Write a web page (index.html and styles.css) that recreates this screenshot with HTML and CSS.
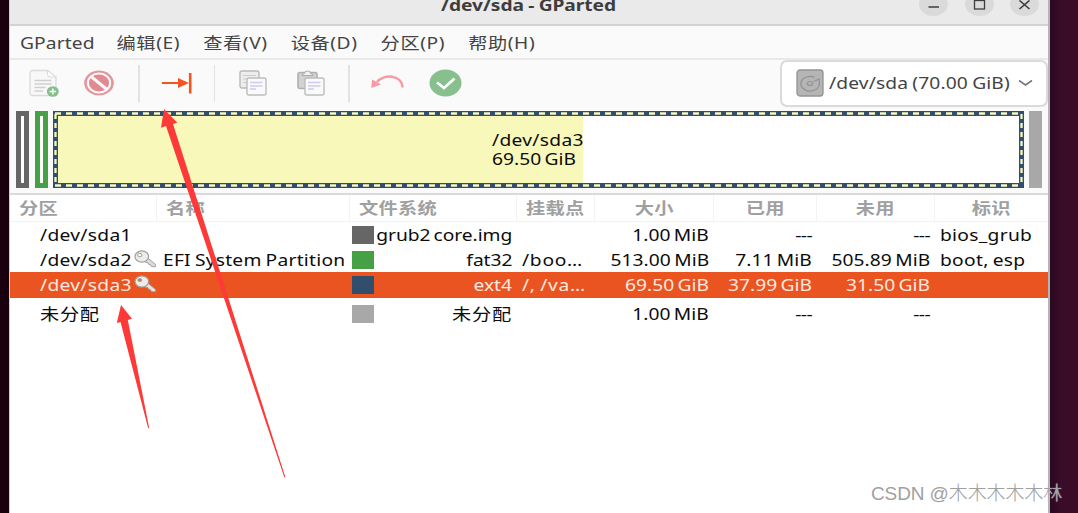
FILE: index.html
```html
<!DOCTYPE html>
<html lang="zh-CN">

<head>
    <meta charset="UTF-8">
    <meta name="viewport" content="width=device-width, initial-scale=1.0">
    <title>/dev/sda - GParted</title>
    <link rel="stylesheet" href="styles.css">
</head>

<body>
    <div class="window">
        <div class="titlebar">
            <div class="title"><span class="wide">/dev/sda - GParted</span></div>
            <div class="window-buttons">
                <svg width="29" height="24" viewBox="0 0 29 24"><ellipse cx="14.5" cy="12" rx="14.5" ry="12" fill="#dadada"/><path d="M9.500 15h10.500" stroke="#3d3d3d" stroke-width="1.500"/></svg>
                <svg width="29" height="24" viewBox="0 0 29 24"><ellipse cx="14.5" cy="12" rx="14.5" ry="12" fill="#dadada"/><rect x="9.500" y="8.500" width="10" height="8.500" fill="none" stroke="#3d3d3d" stroke-width="1.300"/></svg>
                <svg width="29" height="24" viewBox="0 0 29 24"><ellipse cx="14.5" cy="12" rx="14.5" ry="12" fill="#dadada"/><path d="M9.500 8.500l10 8.500M19.500 8.500l-10 8.500" stroke="#3d3d3d" stroke-width="1.600"/></svg>
            </div>
        </div>

        <div class="menubar">
            <div class="menu-items">
                <span>GParted</span>
                <span>编辑(E)</span>
                <span>查看(V)</span>
                <span>设备(D)</span>
                <span>分区(P)</span>
                <span>帮助(H)</span>
            </div>
        </div>

        <div class="toolbar">
            <!-- new partition -->
            <svg class="tool new" width="30" height="28" viewBox="0 0 30 28">
                <path d="M4 1.500h14.500l8.500 6.500v15.500q0 3-3 3H4q-3 0-3-3V4.500q0-3 3-3z" fill="#f8f8f8" stroke="#dadada" stroke-width="1.300"/>
                <path d="M18.500 1.500v4q0 2.500 3 2.500H27z" fill="#fff" stroke="#dadada"/>
                <path d="M5.500 11.500h17M5.500 15h17M5.500 18.500h11M5.500 22h8.500" stroke="#cfcfcf" stroke-width="1.300"/>
                <ellipse cx="23.800" cy="22.500" rx="6" ry="5.200" fill="#84bf8c"/>
                <path d="M20.500 22.500h6.600M23.800 19.500v6" stroke="#fff" stroke-width="1.500"/>
            </svg>
            <!-- delete partition -->
            <svg class="tool del" width="30" height="26" viewBox="0 0 30 26">
                <ellipse cx="15" cy="13" rx="14.800" ry="12.500" fill="#e4959c"/>
                <ellipse cx="15" cy="13" rx="11" ry="9.300" fill="none" stroke="#fafafa" stroke-width="2.400"/>
                <ellipse cx="15" cy="13" rx="10" ry="8.400" fill="#e18a92"/>
                <path d="M7 6.500l16 13" stroke="#fafafa" stroke-width="3"/>
            </svg>
            <i class="sep s1"></i>
            <!-- resize / move -->
            <svg class="tool resize" width="32" height="22" viewBox="0 0 32 22">
                <path d="M1 11h18" stroke="#f4541e" stroke-width="2"/>
                <path d="M17 6l11 5-11 5z" fill="#f4541e"/>
                <path d="M29.200 1v20.500" stroke="#f4541e" stroke-width="2.600"/>
            </svg>
            <i class="sep s2"></i>
            <!-- copy -->
            <svg class="tool copy" width="28" height="26" viewBox="0 0 28 26">
                <rect x="1" y="1" width="19" height="17" rx="2" fill="#ededed" stroke="#b9b9b9" stroke-width="1.400"/>
                <path d="M4 5.500h13M4 9h5M4 12.500h4" stroke="#cccccc" stroke-width="1.200"/>
                <rect x="8" y="8" width="19" height="17" rx="2" fill="#fafafa" stroke="#bdbdbd" stroke-width="1.400"/>
                <path d="M11 12.500h12.500M11 16h12.500M11 19h6" stroke="#ccccef" stroke-width="1.300"/>
            </svg>
            <!-- paste -->
            <svg class="tool paste" width="28" height="26" viewBox="0 0 28 26">
                <rect x="1" y="2.500" width="19" height="16" rx="2" fill="#d2d2d2" stroke="#b0b0b0" stroke-width="1.600"/>
                <path d="M5 5.500q0-2 2.500-2 0-2.500 3-2.500t3 2.500q2.500 0 2.500 2z" fill="#f2f2f2" stroke="#aaa"/>
                <rect x="8" y="8" width="19" height="17" rx="2" fill="#fafafa" stroke="#bdbdbd" stroke-width="1.400"/>
                <path d="M11 12.500h12.500M11 16h12.500M11 19h6" stroke="#ccccef" stroke-width="1.300"/>
            </svg>
            <i class="sep s3"></i>
            <!-- undo -->
            <svg class="tool undo" width="33" height="14" viewBox="0 0 33 14">
                <path d="M6 7C12-1 31-1 31.500 12.500" fill="none" stroke="#f79aa2" stroke-width="2.400"/>
                <path d="M1 4.500L.300 13l9.800-3.500z" fill="#f79aa2"/>
            </svg>
            <!-- apply -->
            <svg class="tool apply" width="33" height="28" viewBox="0 0 33 28">
                <ellipse cx="16.500" cy="14" rx="16" ry="13.500" fill="#87c08d"/>
                <path d="M8 13.500l7 5.500L25.500 9.500" fill="none" stroke="#fff" stroke-width="2.600"/>
            </svg>

            <div class="device-combo">
                <svg width="28" height="28" viewBox="0 0 28 28">
                    <rect x="1" y="1" width="26" height="26" rx="3" fill="#b5b5b5" stroke="#929292" stroke-width="1.300"/>
                    <path d="M18.500 8.300A9.300 7.300 0 1 0 23.300 13.500v-3.500l-5.500 2.500" fill="none" stroke="#929292" stroke-width="1.200"/>
                    <ellipse cx="14" cy="14.500" rx="2.600" ry="2" fill="none" stroke="#929292" stroke-width="1.200"/>
                </svg>
                <span class="combo-text"><span class="wide">/dev/sda (70.00 GiB)</span></span>
                <svg width="15" height="8" viewBox="0 0 15 8"><path d="M1 1.500l6.500 4.500L14 1.500" fill="none" stroke="#777" stroke-width="1.600"/></svg>
            </div>
        </div>

        <div class="disk-view">
            <div class="part gray"></div>
            <div class="part green"></div>
            <div class="part-main">
                <div class="used"></div>
                <svg class="dashes" width="971" height="77">
                    <path d="M2 2.500H969M2 74.500H969" stroke-dasharray="6 5"/>
                    <path d="M2.500 3V74M968.500 3V74" stroke-dasharray="5 4"/>
                </svg>
                <div class="part-label">
                    <span class="wide">/dev/sda3</span>
                    <span class="wide num-text">69.50 GiB</span>
                </div>
            </div>
            <div class="part unallocated"></div>
        </div>

        <div class="list">
            <div class="row head">
                <div><span class="wide">分区</span></div>
                <div><span class="wide">名称</span></div>
                <div><span class="wide">文件系统</span></div>
                <div><span class="wide">挂载点</span></div>
                <div><span class="wide">大小</span></div>
                <div><span class="wide">已用</span></div>
                <div><span class="wide">未用</span></div>
                <div><span class="wide">标识</span></div>
            </div>
            <div class="row">
                <div class="dev"><span class="wide">/dev/sda1</span></div>
                <div></div>
                <div class="fs"><i class="swatch grub"></i><span class="wide">grub2 core.img</span></div>
                <div></div>
                <div class="num"><span class="wide">1.00 MiB</span></div>
                <div class="num"><span class="wide dash">---</span></div>
                <div class="num"><span class="wide dash">---</span></div>
                <div class="flags"><span class="wide">bios_grub</span></div>
            </div>
            <div class="row">
                <div class="dev"><span class="wide">/dev/sda2</span>
                    <svg class="key" width="23" height="18" viewBox="0 0 23 18">
                        <path d="M12 6.500L21.500 14.500v2.200h-4l-1-2-2-.5-.5-1.500-2.500-.5-2-1.500z" fill="#dcdcdc" stroke="#a0a0a0"/>
                        <ellipse cx="7.800" cy="6.500" rx="6.800" ry="5.600" fill="#ececea" stroke="#a0a0a0" stroke-width="1.200"/>
                        <ellipse cx="5.800" cy="5" rx="2.200" ry="1.700" fill="#fff" stroke="#a0a0a0"/>
                    </svg>
                </div>
                <div class="name"><span class="wide">EFI System Partition</span></div>
                <div class="fs"><i class="swatch fat"></i><span class="wide">fat32</span></div>
                <div class="mount"><span class="wide">/boo…</span></div>
                <div class="num"><span class="wide">513.00 MiB</span></div>
                <div class="num"><span class="wide">7.11 MiB</span></div>
                <div class="num"><span class="wide">505.89 MiB</span></div>
                <div class="flags"><span class="wide">boot, esp</span></div>
            </div>
            <div class="row selected">
                <div class="dev"><span class="wide">/dev/sda3</span>
                    <svg class="key" width="23" height="18" viewBox="0 0 23 18">
                        <path d="M12 6.500L21.500 14.500v2.200h-4l-1-2-2-.5-.5-1.500-2.500-.5-2-1.500z" fill="#e4e4e4" stroke="#a89a90"/>
                        <ellipse cx="7.800" cy="6.500" rx="6.800" ry="5.600" fill="#ececea" stroke="#a89a90" stroke-width="1.200"/>
                        <ellipse cx="5.800" cy="5" rx="2" ry="1.500" fill="#d9774c" stroke="#a0a0a0"/>
                    </svg>
                </div>
                <div></div>
                <div class="fs"><i class="swatch ext"></i><span class="wide">ext4</span></div>
                <div class="mount"><span class="wide">/, /va…</span></div>
                <div class="num"><span class="wide">69.50 GiB</span></div>
                <div class="num"><span class="wide">37.99 GiB</span></div>
                <div class="num"><span class="wide">31.50 GiB</span></div>
                <div></div>
            </div>
            <div class="row free">
                <div class="dev"><span class="wide">未分配</span></div>
                <div></div>
                <div class="fs"><i class="swatch none"></i><span class="wide">未分配</span></div>
                <div></div>
                <div class="num"><span class="wide">1.00 MiB</span></div>
                <div class="num"><span class="wide dash">---</span></div>
                <div class="num"><span class="wide dash">---</span></div>
                <div></div>
            </div>
        </div>
    </div>

    <!-- hand-drawn arrows over the window -->
    <svg class="arrows" width="1078" height="513" viewBox="0 0 1078 513">
        <path d="M164 109l13.300 13.700-4.300 1.300L285.300 477l-1 .3L166 126l-5 1.700z"/>
        <path d="M121 305l11 13.700-4.200 1.300L149.200 428l-1 .2L120.500 322l-3.700 1z"/>
    </svg>
    <div class="watermark">CSDN @木木木木木林</div>
</body>

</html>
```
FILE: styles.css
```css
body {
    margin: 0;
    width: 1078px;
    height: 513px;
    overflow: hidden;
    position: relative;
    background: linear-gradient(to right, #18000f 0, #18000f 10px, #2a0820 1049px, #3a0c28 1062px, #3a0c28 100%);
    font-family: "Noto Sans", "Noto Sans CJK SC", sans-serif;
    font-size: 16px;
    color: #0c0c0c;
}

/* the desktop is scaled wider than tall, so the text is too */
.wide {
    display: inline-block;
    white-space: nowrap;
    letter-spacing: 0.25px;
    word-spacing: -1px;
    transform: scaleX(1.2);
    transform-origin: left center;
}

svg {
    display: block;
    flex: none;
}

.window {
    box-sizing: border-box;
    width: 1041px;
    height: 513px;
    margin-left: 9px;
    background: #fafafa;
    border-left: 1px solid #cfcfcf;
    border-right: 2px solid #b5b5b5;
    display: flex;
    flex-direction: column;
}

.titlebar {
    box-sizing: border-box;
    height: 26px;
    flex: none;
    background: #eaeaea;
    border-bottom: 2px solid #d3d3d3;
    display: flex;
    align-items: flex-start;
}

.title {
    flex: 1;
    padding-left: 431px;
    margin-top: -7px;
    line-height: 24px;
    font-weight: bold;
    color: #3d3d3d;
}

.title .wide {
    letter-spacing: -0.05px;
    word-spacing: -0.5px;
}

.window-buttons {
    display: flex;
    gap: 16.500px;
    margin: -8px 9px 0 0;
}

.menubar {
    box-sizing: border-box;
    height: 34px;
    flex: none;
    border-bottom: 2px solid #e9e9e9;
    padding-left: 10px;
    color: #444;
}

.menu-items {
    display: flex;
    gap: 19.200px;
    width: max-content;
    line-height: 35px;
    letter-spacing: 0.5px;
    transform: scaleX(1.2);
    transform-origin: left center;
}

.menu-items span:first-child {
    letter-spacing: 0.1px;
    margin-right: -1px;
}

.toolbar {
    height: 47px;
    flex: none;
    display: flex;
    align-items: center;
}

.toolbar .tool {
    margin-bottom: 1px;
}

.new {
    margin-left: 19px;
}

.del {
    margin-left: 25px;
}

.sep {
    width: 1.500px;
    height: 37px;
    background: #e2e2e2;
}

.s1 {
    margin-left: 24px;
}

.resize {
    margin-left: 21px;
}

.s2 {
    margin-left: 21px;
}

.copy {
    margin-left: 24px;
}

.paste {
    margin-left: 30px;
}

.s3 {
    margin-left: 23px;
}

.undo {
    margin-left: 21px;
}

.toolbar .undo {
    margin-bottom: 4px;
}

.apply {
    margin-left: 25px;
}

.device-combo {
    box-sizing: border-box;
    width: 268px;
    height: 47px;
    margin-left: auto;
    border: 2px solid #dadada;
    border-radius: 7px;
    background: #fff;
    display: flex;
    align-items: center;
    padding: 0 0 2px 14px;
    color: #444;
}

.combo-text {
    width: 189px;
    margin-left: 5px;
}

.combo-text .wide {
    letter-spacing: 0.1px;
    word-spacing: -0.7px;
}

.disk-view {
    box-sizing: border-box;
    height: 86px;
    flex: none;
    padding: 4px 0 0 6px;
    display: flex;
    align-items: flex-start;
}

.part {
    box-sizing: border-box;
    width: 13px;
    height: 77px;
    border: 5px solid #666;
    background: #fff;
    margin-right: 6px;
}

.part.green {
    border-color: #46a046;
    margin-right: 5px;
}

.part.unallocated {
    border-color: #a8a8a8;
    background: #a8a8a8;
    margin: 0 0 0 5px;
}

.part-main {
    box-sizing: border-box;
    position: relative;
    width: 971px;
    height: 77px;
    border: 5px solid #314e6c;
    background: #fff;
}

.used {
    width: 525px;
    height: 100%;
    background: #f8f8ba;
}

.dashes {
    position: absolute;
    left: -5px;
    top: -5px;
    fill: none;
    stroke: #f8f8ba;
    stroke-width: 2.300px;
}

.part-label {
    position: absolute;
    left: 434px;
    top: 15px;
    display: flex;
    flex-direction: column;
    line-height: 19px;
}

.list {
    flex: 1;
    border-top: 2px solid #dadada;
    background: #fff;
}

.row {
    display: grid;
    grid-template-columns: 147px 193px 167px 78px 119px 103px 118px 1fr;
    height: 25px;
    line-height: 27px;
}

.row > div {
    display: flex;
    align-items: center;
    min-width: 0;
}

.head {
    height: 27px;
    line-height: 26px;
    color: #a0a0a0;
    font-weight: bold;
}

.head > div {
    box-sizing: border-box;
    border-right: 1px solid #f3f3f3;
    border-bottom: 1px solid #f3f3f3;
    padding-left: 9px;
}

.head > div:nth-child(n+5) {
    justify-content: center;
    padding-left: 0;
}

.head > div:nth-child(n+5) .wide {
    transform-origin: center;
}

.head > div:last-child {
    border-right: 0;
}

.dev {
    padding-left: 30px;
    position: relative;
}

.key {
    position: absolute;
    left: 124px;
    top: 3px;
}

.name {
    padding-left: 6px;
}

.name .wide {
    letter-spacing: 0.2px;
}

.fs {
    padding: 0 5px 0 2px;
    justify-content: space-between;
}

.fs .wide,
.num .wide {
    transform-origin: right center;
}

.fs .wide {
    letter-spacing: -0.05px;
    word-spacing: -1.500px;
}

.num .wide,
.wide.num-text {
    letter-spacing: 0.03px;
    word-spacing: -1.400px;
}

.num .wide.dash {
    letter-spacing: -0.4px;
}

.mount,
.flags {
    padding-left: 5px;
}

.mount .wide {
    letter-spacing: 0.6px;
}

.num {
    justify-content: flex-end;
    padding-right: 5px;
}

.swatch {
    width: 22px;
    height: 18px;
    flex: none;
    margin-bottom: 2px;
}

.grub {
    background: #666;
}

.fat {
    background: #46a046;
}

.ext {
    background: #314e6c;
}

.none {
    background: #a8a8a8;
}

.selected {
    background: #e95420;
    color: #ffe9e0;
    height: 26px;
}

.free {
    height: 32px;
    line-height: 33px;
}

.free .dev .wide,
.free .fs .wide {
    letter-spacing: 0.6px;
}

.arrows {
    position: absolute;
    left: 0;
    top: 0;
    fill: #fd3a38;
    pointer-events: none;
}

.watermark {
    position: absolute;
    left: 871px;
    top: 482px;
    white-space: nowrap;
    font-family: "Liberation Sans", "Noto Sans CJK SC", sans-serif;
    font-size: 19px;
    line-height: 24px;
    letter-spacing: -0.1px;
    font-weight: 300;
    color: #a0a0a0;
    text-shadow: 0 0 1px #fff;
}
```
